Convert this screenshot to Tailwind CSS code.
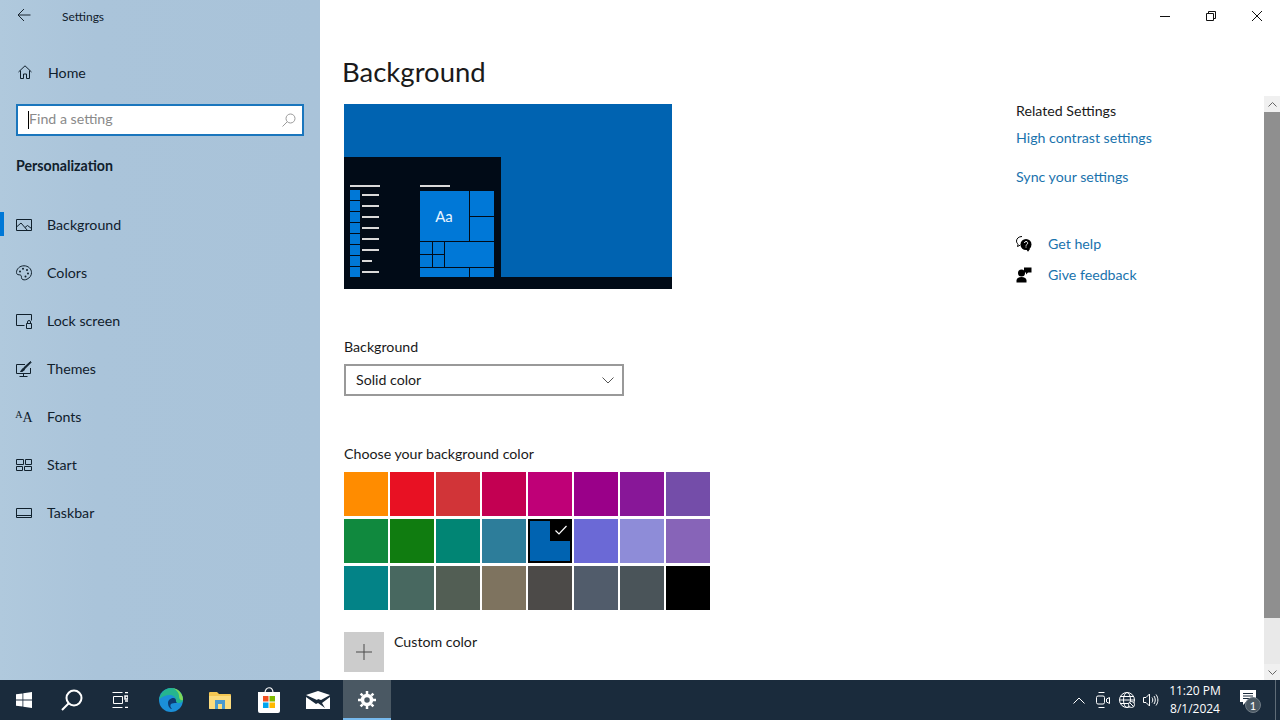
<!DOCTYPE html>
<html lang="en">
<head>
    <meta charset="UTF-8">
    <title>Settings</title>
    <script src="https://cdn.jsdelivr.net/npm/@tailwindcss/browser@4"></script>
</head>
<body class="w-[1280px] h-[720px] overflow-hidden flex flex-col font-['Lato','Open_Sans',sans-serif] text-[14.2px] text-[#1a1a1a] bg-white">

    <div class="flex h-[680px]">
        <!-- sidebar -->
        <aside class="w-[320px] shrink-0 flex flex-col bg-gradient-to-r from-[#b0c9dd] via-[#aac4da] via-30% to-[#a9c3d9] text-[#10202c]">
            <div class="h-8 flex items-center pl-[17px]">
                <svg class="w-[14px] h-[14px] -translate-y-[1px]" viewBox="0 0 14 14" fill="none" stroke="#1a2630" stroke-width="1"><path d="M1 7h12.500M7 1 1 7l6 6"/></svg>
                <span class="ml-[31px] text-[12px] translate-y-[1px]">Settings</span>
            </div>
            <div class="h-[48px] mt-[16px] flex items-center pl-[18px] gap-[16px]">
                <svg class="w-[14px] h-[14px]" viewBox="0 0 14 14" fill="none" stroke="#10202c" stroke-width="1"><path d="M0.500 7 7 0.800 13.500 7M2.500 5.500v8h3V9h3v4.500h3v-8"/></svg>
                <span class="translate-y-[1px]">Home</span>
            </div>
            <div class="mx-4 mt-[8px] h-[32px] border-2 border-[#1a76bd] bg-white flex items-center pl-[10px] pr-[6px]">
                <span class="w-px h-[18px] bg-black"></span>
                <span class="flex-1 text-[#8a8a8a] -translate-y-[1px]">Find a setting</span>
                <svg class="w-[14px] h-[14px]" viewBox="0 0 14 14" fill="none" stroke="#9a9a9a" stroke-width="1"><circle cx="8.500" cy="5.500" r="4.500"/><path d="M5.200 8.800 0.500 13.500"/></svg>
            </div>
            <div class="mt-[20px] pl-4 font-bold leading-5">Personalization</div>
            <nav class="mt-[25px] flex flex-col">
                <div class="relative h-[48px] flex items-center pl-4 gap-[15px]">
                    <span class="absolute left-0 top-[11px] w-1 h-6 bg-[#0078d7]"></span>
                    <svg class="w-4 h-4" viewBox="0 0 16 16" fill="none" stroke="#10202c" stroke-width="1"><path d="M.5 2.500h15v11H.5zM.5 10 5 6l6.500 7.500M9 10.500l2.500-2 4 3"/></svg>
                    <span>Background</span>
                </div>
                <div class="h-[48px] flex items-center pl-4 gap-[15px]">
                    <svg class="w-4 h-4" viewBox="0 0 16 16" fill="none" stroke="#10202c" stroke-width="1"><path d="M8 .8C3.800.8.500 3.800.500 7.500c0 1.500 1 2.300 2.500 2.300 1.200 0 2 .3 2.300 1.200.4 1.200-.2 2 .7 3 1 1 3 1.200 5 .2 2.800-1.300 4.500-3.700 4.500-6.500C15.500 3.800 12.200.8 8 .8z"/><circle cx="4" cy="6.500" r="1" fill="#10202c" stroke="none"/><circle cx="7" cy="3.800" r="1" fill="#10202c" stroke="none"/><circle cx="11" cy="5" r="1" fill="#10202c" stroke="none"/><circle cx="12" cy="8.500" r="1" fill="#10202c" stroke="none"/><circle cx="9.500" cy="11.500" r="1" fill="#10202c" stroke="none"/></svg>
                    <span>Colors</span>
                </div>
                <div class="h-[48px] flex items-center pl-4 gap-[15px]">
                    <svg class="w-4 h-4" viewBox="0 0 16 16" fill="none" stroke="#10202c" stroke-width="1"><path d="M8.500 12.500H.5v-11h15v6M10.500 10.500h5v5h-5zM11.500 10.500V9a1.500 1.500 0 0 1 3 0v1.500"/></svg>
                    <span>Lock screen</span>
                </div>
                <div class="h-[48px] flex items-center pl-4 gap-[15px]">
                    <svg class="w-4 h-4" viewBox="0 0 16 16" fill="none" stroke="#10202c" stroke-width="1"><path d="M9 3.500H.5v9h14V7M7.500 12.500v2.500M3.500 15.500h8"/><path d="M14.500.5 8 6.500 6.500 8l-2 2.500c2.500 0 3.500-.5 4-2.500L15 1.500z" fill="#10202c"/></svg>
                    <span>Themes</span>
                </div>
                <div class="h-[48px] flex items-center pl-4 gap-[15px]">
                    <span class="w-4 h-4 flex items-end justify-center leading-none font-['Liberation_Serif',serif]"><span class="text-[10px] -translate-y-[5px]">A</span><span class="text-[14px]">A</span></span>
                    <span>Fonts</span>
                </div>
                <div class="h-[48px] flex items-center pl-4 gap-[15px]">
                    <svg class="w-4 h-4" viewBox="0 0 16 16" fill="none" stroke="#10202c" stroke-width="1"><path d="M.5 2.500h7v5h-7zM9.500 2.500h6v5h-6zM.5 9.500h6v4h-6zM8.500 9.500h7v4h-7z"/></svg>
                    <span>Start</span>
                </div>
                <div class="h-[48px] flex items-center pl-4 gap-[15px]">
                    <svg class="w-4 h-4" viewBox="0 0 16 16" fill="none" stroke="#10202c" stroke-width="1"><path d="M.5 3.500h15v9H.5zM.5 10.500h15"/></svg>
                    <span>Taskbar</span>
                </div>
            </nav>
        </aside>

        <!-- main -->
        <main class="relative flex-1 flex bg-white">
            <section class="w-[680px] pl-6 flex flex-col">
                <h1 class="mt-[50px] -ml-[2px] h-[44px] text-[27.5px] leading-[44px] text-[#1a1a1a]">Background</h1>

                <svg class="mt-[10px] w-[328px] h-[185px]" viewBox="344 104 328 185" shape-rendering="crispEdges">
                    <rect x="344" y="104" width="328" height="185" fill="#0063b1"/>
                    <rect x="344" y="157" width="157" height="120" fill="#010b17"/>
                    <rect x="344" y="277" width="328" height="12" fill="#010b17"/>
                    <rect x="350" y="185" width="30" height="2" fill="#d9d9d9"/>
                    <rect x="420" y="185" width="30" height="2" fill="#d9d9d9"/>
                    <g fill="#0078d7">
                        <rect x="350" y="190" width="10" height="10"/><rect x="350" y="201" width="10" height="10"/>
                        <rect x="350" y="212" width="10" height="10"/><rect x="350" y="223" width="10" height="10"/>
                        <rect x="350" y="234" width="10" height="10"/><rect x="350" y="245" width="10" height="10"/>
                        <rect x="350" y="256" width="10" height="10"/><rect x="350" y="267" width="10" height="10"/>
                        <rect x="420" y="191" width="49" height="50"/>
                        <rect x="470" y="191" width="24" height="25"/><rect x="470" y="217" width="24" height="24"/>
                        <rect x="420" y="242" width="12" height="12"/><rect x="433" y="242" width="11" height="12"/>
                        <rect x="420" y="255" width="12" height="12"/><rect x="433" y="255" width="11" height="12"/>
                        <rect x="445" y="242" width="49" height="25"/>
                        <rect x="420" y="268" width="49" height="9"/><rect x="470" y="268" width="24" height="9"/>
                    </g>
                    <g fill="#d9d9d9">
                        <rect x="362" y="194" width="17" height="2"/><rect x="362" y="205" width="17" height="2"/>
                        <rect x="362" y="216" width="17" height="2"/><rect x="362" y="227" width="17" height="2"/>
                        <rect x="362" y="238" width="17" height="2"/><rect x="362" y="249" width="17" height="2"/>
                        <rect x="362" y="260" width="10" height="2"/><rect x="362" y="271" width="17" height="2"/>
                    </g>
                    <text x="444" y="222" text-anchor="middle" fill="#e8f4ff" font-size="15" shape-rendering="auto">Aa</text>
                </svg>

                <label class="mt-[48px] h-5 leading-5">Background</label>
                <div class="mt-[7px] w-[280px] h-8 border-2 border-[#999] flex items-center justify-between pl-[10px] pr-[8px]">
                    <span>Solid color</span>
                    <svg class="w-3 h-[7px]" viewBox="0 0 12 7" fill="none" stroke="#555" stroke-width="1"><path d="M.5.500 6 6l5.500-5.500"/></svg>
                </div>

                <div class="mt-[48px] h-5 leading-5">Choose your background color</div>
                <div class="mt-[8px] grid grid-cols-[repeat(8,44px)] auto-rows-[44px] gap-x-[2px] gap-y-[3px]">
                    <div class="bg-[#ff8c00]"></div>
                    <div class="bg-[#e81123]"></div>
                    <div class="bg-[#d13438]"></div>
                    <div class="bg-[#c30052]"></div>
                    <div class="bg-[#bf0077]"></div>
                    <div class="bg-[#9a0089]"></div>
                    <div class="bg-[#881798]"></div>
                    <div class="bg-[#744da9]"></div>
                    <div class="bg-[#10893e]"></div>
                    <div class="bg-[#107c10]"></div>
                    <div class="bg-[#018574]"></div>
                    <div class="bg-[#2d7d9a]"></div>
                    <div class="relative bg-[#0063b1] border-2 border-black">
                        <div class="absolute -top-[2px] -right-[2px] w-[22px] h-[22px] bg-black flex items-center justify-center">
                            <svg class="w-3 h-[10px]" viewBox="0 0 12 10" fill="none" stroke="#fff" stroke-width="1.200"><path d="M.5 5.500 4 9l7.500-8"/></svg>
                        </div>
                    </div>
                    <div class="bg-[#6b69d6]"></div>
                    <div class="bg-[#8e8cd8]"></div>
                    <div class="bg-[#8764b8]"></div>
                    <div class="bg-[#038387]"></div>
                    <div class="bg-[#486860]"></div>
                    <div class="bg-[#525e54]"></div>
                    <div class="bg-[#7e735f]"></div>
                    <div class="bg-[#4c4a48]"></div>
                    <div class="bg-[#515c6b]"></div>
                    <div class="bg-[#4a5459]"></div>
                    <div class="bg-black"></div>
                </div>
                <div class="mt-[22px] flex gap-[10px]">
                    <div class="w-10 h-10 bg-[#ccc] flex items-center justify-center">
                        <svg class="w-4 h-4" viewBox="0 0 16 16" stroke="#4a4a4a" stroke-width="1"><path d="M8 0v16M0 8h16"/></svg>
                    </div>
                    <span class="leading-5">Custom color</span>
                </div>
            </section>

            <section class="ml-[16px] pt-[101px] flex flex-col">
                <div class="h-5 leading-5">Related Settings</div>
                <a class="mt-[7px] h-5 leading-5 text-[#1a73ad]">High contrast settings</a>
                <a class="mt-[19px] h-5 leading-5 text-[#1a73ad]">Sync your settings</a>
                <div class="mt-[47px] h-5 flex items-center gap-[16px]">
                    <svg class="w-4 h-4" viewBox="0 0 16 16"><path d="M6 .5C2.800.5.500 2.500.500 5c0 1.300.6 2.400 1.600 3.200L1.500 10.500l2.800-1.400" fill="none" stroke="#000" stroke-width="1"/><circle cx="10" cy="8.500" r="5.500" fill="#000"/><path d="M12 15.800 10 13h4z" fill="#000"/><path d="M8.500 7a1.600 1.600 0 1 1 2.300 1.500c-.6.300-.8.600-.8 1.200" fill="none" stroke="#fff" stroke-width="1"/><rect x="9.500" y="10.500" width="1" height="1" fill="#fff"/></svg>
                    <a class="text-[#1a73ad]">Get help</a>
                </div>
                <div class="mt-[11px] h-5 flex items-center gap-[16px]">
                    <svg class="w-4 h-4" viewBox="0 0 16 16" fill="#000"><circle cx="5.500" cy="6" r="3.500"/><path d="M.5 15.500v-2c0-2 2-3.500 5-3.500s5 1.500 5 3.500v2z"/><path d="M8 .5h7.500v5H12l-2 2v-2H8z"/></svg>
                    <a class="text-[#1a73ad]">Give feedback</a>
                </div>
            </section>

            <!-- window buttons -->
            <div class="absolute top-0 right-0 flex">
                <div class="w-[46px] h-8 flex items-center justify-center">
                    <svg class="w-[10px] h-[10px]" viewBox="0 0 10 10" stroke="#111" stroke-width="1"><path d="M0 5.500h10"/></svg>
                </div>
                <div class="w-[46px] h-8 flex items-center justify-center">
                    <svg class="w-[10px] h-[10px]" viewBox="0 0 10 10" fill="none" stroke="#111" stroke-width="1"><path d="M.5 2.500h7v7h-7zM2.500 2.500v-2h7v7h-2"/></svg>
                </div>
                <div class="w-[46px] h-8 flex items-center justify-center">
                    <svg class="w-[10px] h-[10px]" viewBox="0 0 10 10" stroke="#111" stroke-width="1"><path d="M0 0l10 10M10 0 0 10"/></svg>
                </div>
            </div>

            <!-- scrollbar -->
            <div class="absolute right-0 top-[96px] bottom-0 w-4 flex flex-col bg-[#e9e9e9]">
                <div class="h-4 bg-[#f0f0f0] flex items-center justify-center">
                    <svg class="w-[9px] h-[5px]" viewBox="0 0 9 5" fill="none" stroke="#666" stroke-width="1"><path d="M.5 4.500l4-4 4 4"/></svg>
                </div>
                <div class="h-[506px] bg-[#8f8f8f]"></div>
                <div class="flex-1"></div>
                <div class="h-4 bg-[#f0f0f0] flex items-center justify-center">
                    <svg class="w-[9px] h-[5px]" viewBox="0 0 9 5" fill="none" stroke="#666" stroke-width="1"><path d="M.5.500l4 4 4-4"/></svg>
                </div>
            </div>
        </main>
    </div>

    <!-- taskbar -->
    <footer class="h-10 bg-[#1a2b3c] flex items-center text-white">
        <div class="w-12 flex justify-center">
            <svg class="w-4 h-4" viewBox="0 0 16 16" fill="#fff"><path d="M0 2.300 6.500 1.400v6.200H0zM7.300 1.300 16 0v7.600H7.300zM0 8.400h6.500v6.200L0 13.700zM7.300 8.400H16V16l-8.700-1.300z"/></svg>
        </div>
        <div class="w-12 flex justify-center">
            <svg class="w-[22px] h-[22px]" viewBox="0 0 22 22" fill="none" stroke="#fff" stroke-width="2"><circle cx="13" cy="9" r="7.500"/><path d="M7.500 14.500 1 21"/></svg>
        </div>
        <div class="w-12 flex justify-center">
            <svg class="w-4 h-4" viewBox="0 0 16 16" fill="none" stroke="#fff" stroke-width="1"><path d="M.5.500h10M.5 15.500h10M1.500 4.500h9v7h-9z"/><path d="M13 .5h3M13 4h3v3h-3zM13 9h3M13 15.500h3" stroke-width="1.500"/></svg>
        </div>
        <div class="w-[54px] flex justify-center">
            <svg class="w-6 h-6" viewBox="0 0 24 24">
                <circle cx="12" cy="12" r="12" fill="#1b8fd8"/>
                <path d="M0 12C1 5 6 0 12 0c7 0 12 5 12 12 0 2-1.500 3-4 3-3 0-3-1-3-2.500 0-3-2.500-5.500-6-5.500S2 8.500 0 12z" fill="#25b58f"/>
                <path d="M24 12c0-6-4-11-10-11.800C18 2 20 5 20 8c0 2 1 5 4 4z" fill="#7fd858"/>
                <path d="M9 15c0-3 3-5.500 6-5 1.500.3 2 1.500 2 3 0 1 .5 1.500 1 2-3 0-5 0-6 1s-1 3 1 5c-2 .3-4-3-4-6z" fill="#0d3a70"/>
            </svg>
        </div>
        <div class="w-[44px] flex justify-center">
            <svg class="w-[22px] h-[18px]" viewBox="0 0 22 18">
                <path d="M0 2a1 1 0 0 1 1-1h7l2 2h11a1 1 0 0 1 1 1v13a1 1 0 0 1-1 1H1a1 1 0 0 1-1-1z" fill="#f4c753"/>
                <path d="M0 5h22v12a1 1 0 0 1-1 1H1a1 1 0 0 1-1-1z" fill="#fcdc7e"/>
                <path d="M6 9h10v9h-3v-5H9v5H6z" fill="#4a9ad0"/>
            </svg>
        </div>
        <div class="w-[54px] flex justify-center">
            <svg class="w-6 h-[26px]" viewBox="0 0 24 26">
                <path d="M8 6c0-7 8-7 8 0" fill="none" stroke="#fff" stroke-width="1.200"/>
                <path d="M1 5h22v19a2 2 0 0 1-2 2H3a2 2 0 0 1-2-2z" fill="#fff"/>
                <rect x="6" y="9" width="5.500" height="5.500" fill="#f25022"/><rect x="12.500" y="9" width="5.500" height="5.500" fill="#7fba00"/>
                <rect x="6" y="15.500" width="5.500" height="5.500" fill="#00a4ef"/><rect x="12.500" y="15.500" width="5.500" height="5.500" fill="#ffb900"/>
            </svg>
        </div>
        <div class="w-[44px] flex justify-center">
            <svg class="w-6 h-[18px]" viewBox="0 0 24 18" fill="#fff">
                <path d="M0 4 12 0l12 4-9 5-3-1-1 1z"/>
                <path d="M0 6v12h24V6l-8 6 3 5-7-5-2 1z"/>
            </svg>
        </div>
        <div class="relative w-12 h-10 ml-[3px] bg-[#4a5863] flex justify-center items-center">
            <svg class="w-[18px] h-[18px]" viewBox="0 0 18 18" fill="none" stroke="#fff" stroke-width="3.500"><circle cx="9" cy="9" r="4.500"/><path stroke-width="2.500" d="M9 0v3M9 15v3M0 9h3M15 9h3M2.600 2.600l2.100 2.100M13.300 13.300l2.100 2.100M2.600 15.400l2.100-2.100M13.300 4.700l2.100-2.100"/></svg>
            <span class="absolute left-0 bottom-0 w-full h-[2px] bg-[#76b9ed]"></span>
        </div>

        <div class="flex-1"></div>

        <svg class="w-3 h-[7px] mr-[10px]" viewBox="0 0 12 7" fill="none" stroke="#fff" stroke-width="1"><path d="M.5 6.500 6 1l5.500 5.500"/></svg>
        <svg class="w-4 h-4 mr-[8px]" viewBox="0 0 16 16" fill="none" stroke="#fff" stroke-width="1"><path d="M3.500.5h6M3.500 15.500h6"/><rect x="1.500" y="4" width="8" height="8" rx="1.500"/><path d="M11.500 7l3-1.500v6l-3-1.500z"/></svg>
        <svg class="w-4 h-4 mr-[8px]" viewBox="0 0 16 16" fill="none" stroke="#fff" stroke-width="1"><circle cx="8" cy="8" r="7.500"/><ellipse cx="8" cy="8" rx="3.500" ry="7.500"/><path d="M.5 8h15M1.500 4.500h13M1.500 11.500h13"/><circle cx="12.500" cy="12.500" r="3" fill="#1a2b3c"/><path d="M10.500 10.500l4 4"/></svg>
        <svg class="w-4 h-4 mr-[7px]" viewBox="0 0 16 16" fill="none" stroke="#fff" stroke-width="1"><path d="M.5 5.500h2.500L6.500 2v12L3 10.500H.5zM9 5.500c1 1.500 1 3.500 0 5M11 4c1.700 2.500 1.700 5.500 0 8M13 2.500c2.500 3.500 2.500 7.500 0 11"/></svg>
        <div class="w-[58px] text-center font-['Open_Sans',sans-serif] text-[12px] leading-[18px]">
            <div>11:20 PM</div>
            <div>8/1/2024</div>
        </div>
        <div class="relative w-[47px] flex justify-center">
            <svg class="w-4 h-4 -translate-y-[2px]" viewBox="0 0 16 16" fill="#fff"><path d="M0 0h16v12H6l-3 3v-3H0z"/><path d="M3 3.500h10M3 6h10M3 8.500h7" stroke="#1a2b3c" stroke-width="1"/></svg>
            <span class="absolute left-[21px] top-[5px] w-[16px] h-[16px] rounded-full bg-[#4a5863] border border-[#6f7b85] flex items-center justify-center text-[11px] leading-none">1</span>
        </div>
        <div class="w-[5px] h-10 ml-[4px] border-l border-[#5f6c77]"></div>
    </footer>

</body>
</html>
